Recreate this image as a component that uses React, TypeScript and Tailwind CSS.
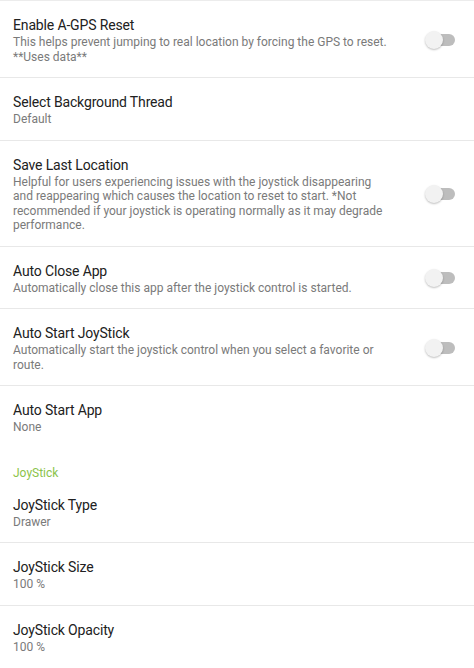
import React from 'react';

interface Pref {
  title: string;
  summary: string;
  toggle?: boolean;
  divider?: boolean;
}

const general: Pref[] = [
  {
    title: 'Enable A-GPS Reset',
    summary: 'This helps prevent jumping to real location by forcing the GPS to reset. **Uses data**',
    toggle: true,
    divider: true,
  },
  { title: 'Select Background Thread', summary: 'Default', divider: true },
  {
    title: 'Save Last Location',
    summary:
      'Helpful for users experiencing issues with the joystick disappearing and reappearing which causes the location to reset to start. *Not recommended if your joystick is operating normally as it may degrade performance.',
    toggle: true,
    divider: true,
  },
  {
    title: 'Auto Close App',
    summary: 'Automatically close this app after the joystick control is started.',
    toggle: true,
    divider: true,
  },
  {
    title: 'Auto Start JoyStick',
    summary: 'Automatically start the joystick control when you select a favorite or route.',
    toggle: true,
    divider: true,
  },
  { title: 'Auto Start App', summary: 'None' },
];

const joystick: Pref[] = [
  { title: 'JoyStick Type', summary: 'Drawer', divider: true },
  { title: 'JoyStick Size', summary: '100 %', divider: true },
  { title: 'JoyStick Opacity', summary: '100 %' },
];

function Toggle() {
  return (
    <div className="relative w-[30px] h-[18px] shrink-0">
      <div className="absolute left-[6px] right-0 top-[3px] h-[12px] rounded-full bg-[#bdbdbd]" />
      <div className="absolute left-0 top-0 w-[18px] h-[18px] rounded-full bg-[#f2f2f2] shadow-[0_1px_2px_rgba(0,0,0,0.25)]" />
    </div>
  );
}

function Row({ item }: { item: Pref }) {
  return (
    <div
      className={`flex items-center pl-[13px] pr-[19px] pt-[15px] pb-[13px] ${
        item.divider ? 'border-b border-[#e8e8e8]' : ''
      }`}
    >
      <div className="flex-1 pr-[34px]">
        <div className="text-[14px] leading-[18px] tracking-[-0.15px] text-[#212121]">{item.title}</div>
        <div className="mt-[1px] text-[12px] leading-[14.5px] text-[#7a7a7a]">{item.summary}</div>
      </div>
      {item.toggle && <Toggle />}
    </div>
  );
}

export default function App() {
  return (
    <div className="w-[474px] h-[668px] overflow-hidden bg-white border-t border-[#ececec] font-['Roboto',sans-serif]">
      {general.map((item, i) => (
        <Row key={i} item={item} />
      ))}
      <div className="pl-[13px] pt-[18px] pb-[1px] text-[12px] leading-[14px] text-[#8bc34a]">JoyStick</div>
      {joystick.map((item, i) => (
        <Row key={i} item={item} />
      ))}
    </div>
  );
}
